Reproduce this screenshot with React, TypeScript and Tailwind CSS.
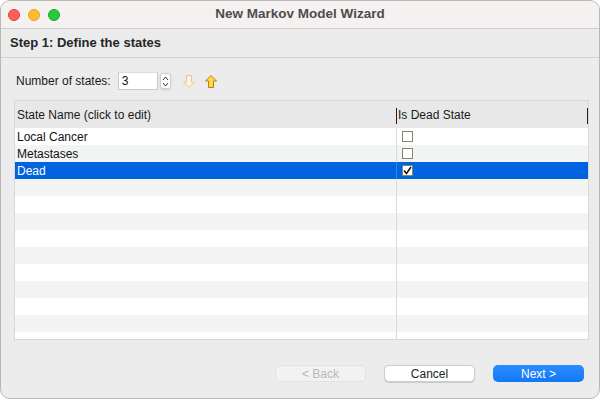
import React from "react";

const rows = [
  { name: "Local Cancer", dead: false },
  { name: "Metastases", dead: false },
  { name: "Dead", dead: true, selected: true },
];

function Checkbox({ checked }: { checked: boolean }) {
  return (
    <div className="w-[11px] h-[11px] bg-white border border-[#84846a] flex items-center justify-center">
      {checked && (
        <svg width="9" height="9" viewBox="0 0 9 9">
          <path d="M1 4.5 L3.5 7.5 L8 1" fill="none" stroke="#111" strokeWidth="1.5" />
        </svg>
      )}
    </div>
  );
}

function Arrow({ up, faded }: { up: boolean; faded: boolean }) {
  const pts = up
    ? "6,0.5 11.5,6 8.5,6 8.5,12.5 3.5,12.5 3.5,6 0.5,6"
    : "6,12.5 11.5,7 8.5,7 8.5,0.5 3.5,0.5 3.5,7 0.5,7";
  return (
    <svg width="12" height="13" viewBox="0 0 12 13">
      <polygon
        points={pts}
        fill={faded ? "#fbf4df" : "#ffd84d"}
        stroke={faded ? "#e2c894" : "#b98309"}
        strokeWidth="1"
        strokeLinejoin="round"
      />
    </svg>
  );
}

export default function App() {
  const total = 13;
  const list = Array.from({ length: total }, (_, i) => rows[i] ?? null);
  return (
    <div className="w-[603px] h-[400px] bg-white" style={{ fontFamily: '"Liberation Sans", Arial, sans-serif' }}>
      <div className="w-[600px] h-[399px] border border-[#b8b8b8] rounded-[10px] overflow-hidden bg-[#ececec] flex flex-col">
        {/* title bar */}
        <div className="h-[28px] shrink-0 bg-[#f5f1f0] border-b border-[#cbcbcb] flex items-center relative">
          <div className="flex items-center gap-[8px] pl-[7px]">
            <div className="w-[12px] h-[12px] rounded-full bg-[#fe5f57] border border-[#e0443e]" />
            <div className="w-[12px] h-[12px] rounded-full bg-[#febc2e] border border-[#dea123]" />
            <div className="w-[12px] h-[12px] rounded-full bg-[#28c840] border border-[#1aab29]" />
          </div>
          <div className="absolute inset-0 flex items-center justify-center text-[13.5px] font-bold text-[#4c4c4c]">
            New Markov Model Wizard
          </div>
        </div>
        {/* step header */}
        <div className="h-[29px] shrink-0 bg-[#ebebeb] border-b border-[#d2d2d2] flex items-center pl-[9px] text-[13px] font-bold text-[#262626]">
          Step 1: Define the states
        </div>
        {/* body */}
        <div className="flex flex-col pl-[13px] pr-[11px] pt-[14px]">
          <div className="h-[18px] flex items-center pl-[2px]">
            <span className="text-[12px] text-[#1a1a1a]">Number of states:</span>
            <div className="ml-[7px] w-[40px] h-[18px] bg-white border border-[#c9c9c9] border-t-[#dcdcdc] flex items-center pl-[3px] text-[12px] text-[#111]">
              3
            </div>
            <div className="ml-[2px] w-[11px] h-[16px] bg-white rounded-[3px] border border-[#cfcfcf] flex flex-col items-center justify-center gap-[1px] shadow-sm">
              <svg width="7" height="5" viewBox="0 0 7 5">
                <path d="M1 4 L3.5 1 L6 4" fill="none" stroke="#333" strokeWidth="1" />
              </svg>
              <svg width="7" height="5" viewBox="0 0 7 5">
                <path d="M1 1 L3.5 4 L6 1" fill="none" stroke="#333" strokeWidth="1" />
              </svg>
            </div>
            <div className="ml-[12px] flex items-center">
              <Arrow up={false} faded={true} />
            </div>
            <div className="ml-[10px] flex items-center">
              <Arrow up={true} faded={false} />
            </div>
          </div>
          {/* table */}
          <div className="mt-[10px] w-[575px] h-[240px] border border-[#d8d8d8] bg-white flex flex-col overflow-hidden">
            <div className="h-[27px] shrink-0 bg-[#e8e8e8] flex text-[12px] text-[#1a1a1a]">
              <div className="w-[381px] flex items-center pl-[2px]">State Name (click to edit)</div>
              <div className="w-[1px] h-[16px] bg-[#1e1e1e] self-center mt-[2px]" />
              <div className="w-[190px] flex items-center pl-[1px]">Is Dead State</div>
              <div className="w-[1px] h-[16px] bg-[#1e1e1e] self-center mt-[2px]" />
            </div>
            {list.map((r, i) => {
              const sel = r && (r as any).selected;
              const bg = sel ? "bg-[#0064e1]" : i % 2 === 0 ? "bg-white" : "bg-[#f3f4f4]";
              return (
                <div key={i} className={`h-[17px] shrink-0 flex ${bg}`}>
                  <div className={`w-[381px] flex items-center pl-[2px] text-[12px] ${sel ? "text-white" : "text-[#111]"}`}>
                    {r ? r.name : ""}
                  </div>
                  <div className={`w-[1px] ${sel ? "bg-[#3a84e6]" : "bg-[#dadada]"}`} />
                  <div className="flex-1 flex items-center pl-[5px]">
                    {r && <Checkbox checked={r.dead} />}
                  </div>
                </div>
              );
            })}
          </div>
          {/* buttons */}
          <div className="mt-[25px] flex justify-end gap-[18px] pr-[4px] text-[12px]">
            <div className="w-[91px] h-[17px] rounded-[5px] bg-[#f2f2f2] border border-[#e2e2e2] flex items-center justify-center text-[#b7b7b7]">
              &lt; Back
            </div>
            <div className="w-[91px] h-[17px] rounded-[5px] bg-white border border-[#cdcdcd] shadow-[0_0.5px_1px_rgba(0,0,0,0.15)] flex items-center justify-center text-[#1e1e1e]">
              Cancel
            </div>
            <div className="w-[91px] h-[17px] rounded-[5px] bg-gradient-to-b from-[#2a8cff] to-[#1178f5] flex items-center justify-center text-white">
              Next &gt;
            </div>
          </div>
        </div>
      </div>
    </div>
  );
}
